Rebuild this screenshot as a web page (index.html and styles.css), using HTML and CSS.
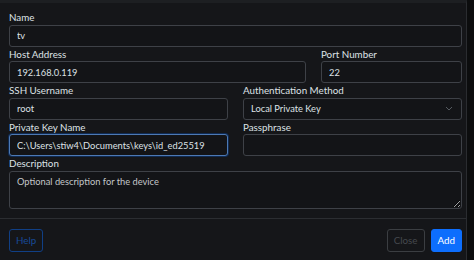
FILE: index.html
```html
<!DOCTYPE html>
<html>
<head>
<meta charset="utf8">
<title>Device</title>
<link rel="stylesheet" href="styles.css">
</head>
<body>
<div class="modal">
	<div class="modal-body">
		<div class="field">
			<label>Name</label>
			<input class="control" type="text" value="tv">
		</div>
		<div class="row row-8-4">
			<div class="field">
				<label>Host Address</label>
				<input class="control" type="text" value="192.168.0.119">
			</div>
			<div class="field">
				<label>Port Number</label>
				<input class="control" type="text" value="22">
			</div>
		</div>
		<div class="row">
			<div class="field">
				<label>SSH Username</label>
				<input class="control" type="text" value="root">
			</div>
			<div class="field">
				<label>Authentication Method</label>
				<div class="select">
					<span>Local Private Key</span>
					<svg width="8" height="5" viewBox="0 0 8 5"><path d="M1 1l3 3 3-3" fill="none" stroke="#555a60" stroke-width="1"/></svg>
				</div>
			</div>
		</div>
		<div class="row">
			<div class="field">
				<label>Private Key Name</label>
				<input class="control focus" type="text" value="C:\Users\stiw4\Documents\keys\id_ed25519">
			</div>
			<div class="field">
				<label>Passphrase</label>
				<input class="control" type="password" value="">
			</div>
		</div>
		<div class="field">
			<label>Description</label>
			<textarea class="control area" placeholder="Optional description for the device"></textarea>
		</div>
	</div>
	<div class="modal-footer">
		<button class="btn btn-help">Help</button>
		<div class="spacer"></div>
		<button class="btn btn-close">Close</button>
		<button class="btn btn-add">Add</button>
	</div>
</div>
</body>
</html>
```

FILE: styles.css
```css
body{
margin:0;
background:#0c0d0e;
font-family:"Segoe UI","Lato","Noto Sans",sans-serif;
font-size:9.5px;
color:#dee2e6;
}
.modal{
width:467px;
height:260px;
background:#151619;
border-right:1px solid #2a2c30;
box-sizing:border-box;
border-top:3px solid #1d1f22;
}
.modal-body{
padding:7px 4px 0 9px;
}
.field{
display:flex;
flex-direction:column;
}
.field label{
font-size:9.8px;
line-height:14.5px;
height:14.5px;
}
.row{
display:grid;
grid-template-columns:1fr 1fr;
column-gap:15px;
}
.row-8-4{
grid-template-columns:297px 141px;
}
.control{
height:22px;
box-sizing:border-box;
margin:0;
padding:0 7px;
background:#131417;
border:1px solid #3e4147;
border-radius:3px;
color:#dee2e6;
font-family:inherit;
font-size:9.3px;
outline:none;
}
.control.focus{
border-color:#4d79b3;
box-shadow:0 0 0 1px #0f2a52;
}
.select{
height:22px;
box-sizing:border-box;
display:flex;
align-items:center;
justify-content:space-between;
padding:0 8px 0 7px;
background:#131417;
border:1px solid #3e4147;
border-radius:3px;
font-size:9.3px;
}
.area{
height:38px;
padding:4px 7px;
resize:vertical;
}
.area::placeholder{
color:#c4c7ca;
}
.modal-footer{
margin-top:9px;
border-top:1px solid #2b2d31;
display:flex;
align-items:center;
padding:10px 4px 0 9px;
}
.spacer{
flex:1;
}
.btn{
height:23px;
box-sizing:border-box;
border-radius:3px;
font-family:inherit;
font-size:9.8px;
padding:0 6px;
background:transparent;
margin-left:6px;
}
.btn-help{
margin-left:0;
border:1px solid #103f85;
color:#174a98;
}
.btn-close{
border:1px solid #3b3e42;
color:#45494e;
}
.btn-add{
border:1px solid #0d6efd;
background:#0d6efd;
color:#fff;
}
```
